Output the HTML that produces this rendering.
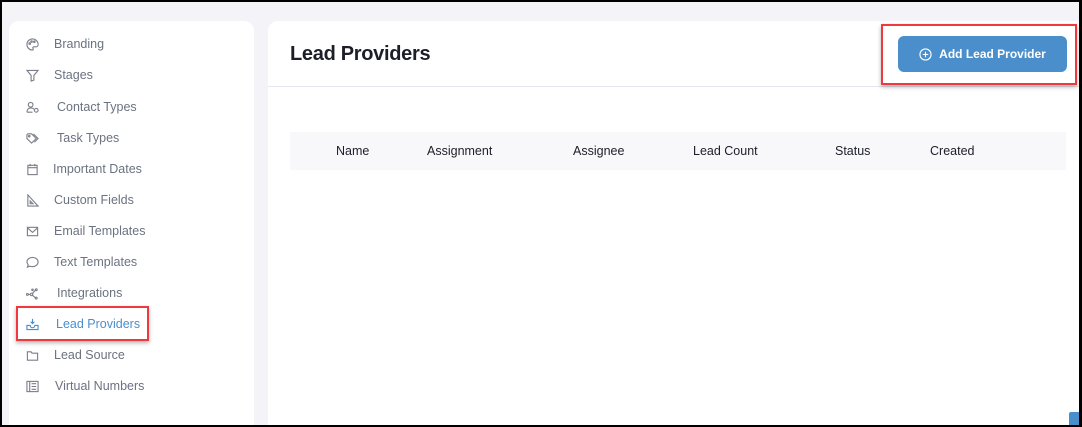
<!DOCTYPE html>
<html><head><style>
*{margin:0;padding:0;box-sizing:border-box}
html,body{width:1082px;height:427px;overflow:hidden}
body{font-family:"Liberation Sans",sans-serif}
.wrap{position:absolute;left:0;top:0;width:1082px;height:427px;overflow:hidden;background:#f4f4f8}
.frame{position:absolute;left:0;top:0;width:1082px;height:427px;border:2px solid #000;border-right-width:3px;z-index:10}
.side{position:absolute;left:9px;top:21px;width:245px;height:420px;background:#fff;border-radius:10px}
.item{position:absolute;left:0;height:20px;font-size:12.5px;color:#6b7280;display:flex;align-items:center}
.item svg{position:absolute;left:17px;width:13px;height:13px;stroke:#7a7f8a;fill:none;stroke-width:1.2}
.item span{position:absolute;white-space:nowrap}
.main{position:absolute;left:268px;top:21px;width:820px;height:420px;background:#fff;border-radius:10px}
h1{position:absolute;left:22px;top:22px;font-size:20px;font-weight:bold;color:#1e1e2a;letter-spacing:-0.3px}
.hr{position:absolute;left:0;right:0;top:65px;height:1px;background:#e6e6ef}
.th{position:absolute;left:22px;top:111px;width:776px;height:38px;background:#f8f8fb;font-size:12.5px;color:#1e1e2a}
.th span{position:absolute;top:12px}
.btn{position:absolute;left:898px;top:36px;width:169px;height:36px;background:#4a8fcb;border-radius:6px;color:#fff;font-size:12px;font-weight:bold;display:flex;align-items:center;justify-content:center;gap:7px}
.red{position:absolute;border:2px solid #f0383f;box-shadow:0 2px 4px rgba(0,0,0,.3)}
</style></head><body><div class="wrap">
<div class="side">
<div class="item" style="top:13px"><svg viewBox="0 0 14 14"><path d="M7 1a6 6 0 1 0 0 12c1 0 1-1 .5-1.8s0-1.7 1-1.7H11a2 2 0 0 0 2-2A6 6 0 0 0 7 1z"/><circle cx="4" cy="6" r=".8"/><circle cx="6" cy="3.8" r=".8"/><circle cx="9" cy="4" r=".8"/></svg><span style="left:45px">Branding</span></div>
<div class="item" style="top:44px"><svg viewBox="0 0 14 14"><path d="M1 1.5h12L8.5 7v5L5.5 13V7z"/></svg><span style="left:45px">Stages</span></div>
<div class="item" style="top:76px"><svg viewBox="0 0 14 14"><circle cx="5" cy="4" r="2.5"/><path d="M1 12c0-3 2-4.5 4-4.5s3 .5 3.5 1.5M1 12h6"/><circle cx="11" cy="10" r="2"/></svg><span style="left:48px">Contact Types</span></div>
<div class="item" style="top:107px"><svg viewBox="0 0 14 14"><path d="M1 3v4l5 5 5-5-5-5H2z"/><path d="M8 2l5 5-4 4"/><circle cx="3.5" cy="4.5" r=".8"/></svg><span style="left:48px">Task Types</span></div>
<div class="item" style="top:138px"><svg viewBox="0 0 14 14"><rect x="2" y="2.5" width="10" height="10"/><path d="M2 5h10M4.5 1v2.5M9.5 1v2.5"/></svg><span style="left:44px">Important Dates</span></div>
<div class="item" style="top:169px"><svg viewBox="0 0 14 14"><path d="M2 1v12h11z"/><path d="M4.5 7.5v3h3z"/></svg><span style="left:45px">Custom Fields</span></div>
<div class="item" style="top:200px"><svg viewBox="0 0 14 14"><rect x="1.5" y="2.5" width="11" height="9"/><path d="M1.5 3l5.5 5 5.5-5"/></svg><span style="left:45px">Email Templates</span></div>
<div class="item" style="top:231px"><svg viewBox="0 0 14 14"><path d="M7 1.5c3.3 0 6 2.2 6 5s-2.7 5-6 5c-1 0-2-.2-2.8-.6L1.5 12l.9-2.5C1.8 8.6 1 7.6 1 6.5c0-2.8 2.7-5 6-5z"/><path d="M4.5 6.5h.1M7 6.5h.1M9.5 6.5h.1"/></svg><span style="left:45px">Text Templates</span></div>
<div class="item" style="top:262px"><svg viewBox="0 0 14 14"><circle cx="1.5" cy="8" r="1"/><circle cx="6" cy="8" r="1.3"/><circle cx="11" cy="3" r="1"/><circle cx="11" cy="12" r="1"/><circle cx="7" cy="3" r=".8"/><path d="M2.5 8h2M7 7l3-3.5M7 9l3 2.5"/></svg><span style="left:48px">Integrations</span></div>
<div class="item" style="top:293px;color:#4a8fcb"><svg viewBox="0 0 14 14" style="stroke:#4a8fcb"><path d="M1 8v4.5h12V8H9.5a2.5 2.5 0 0 1-5 0z"/><path d="M7 1v5M5 4l2 2 2-2"/></svg><span style="left:47px">Lead Providers</span></div>
<div class="item" style="top:324px"><svg viewBox="0 0 14 14"><path d="M1.5 3h4l1 1.5h6v7.5h-11z"/></svg><span style="left:45px">Lead Source</span></div>
<div class="item" style="top:355px"><svg viewBox="0 0 14 14"><rect x="1" y="1.5" width="12" height="11"/><path d="M4 1.5v11M6 4h5M6 7h5M6 10h5"/></svg><span style="left:46px">Virtual Numbers</span></div>
</div>
<div class="main">
<h1>Lead Providers</h1>
<div class="hr"></div>
<div class="th"><span style="left:46px">Name</span><span style="left:137px">Assignment</span><span style="left:283px">Assignee</span><span style="left:403px">Lead Count</span><span style="left:545px">Status</span><span style="left:640px">Created</span></div>
</div>
<div class="btn"><svg width="13" height="13" viewBox="0 0 14 14" fill="none" stroke="#fff" stroke-width="1.2"><circle cx="7" cy="7" r="6"/><path d="M7 4v6M4 7h6"/></svg>Add Lead Provider</div>
<div class="red" style="left:881px;top:24px;width:196px;height:61px"></div>
<div class="red" style="left:16px;top:306px;width:133px;height:35px"></div>
<div style="position:absolute;left:1069px;top:412px;width:12px;height:15px;background:#4a8fcb;border-radius:2px"></div>
<div class="frame"></div>
</div></body></html>
